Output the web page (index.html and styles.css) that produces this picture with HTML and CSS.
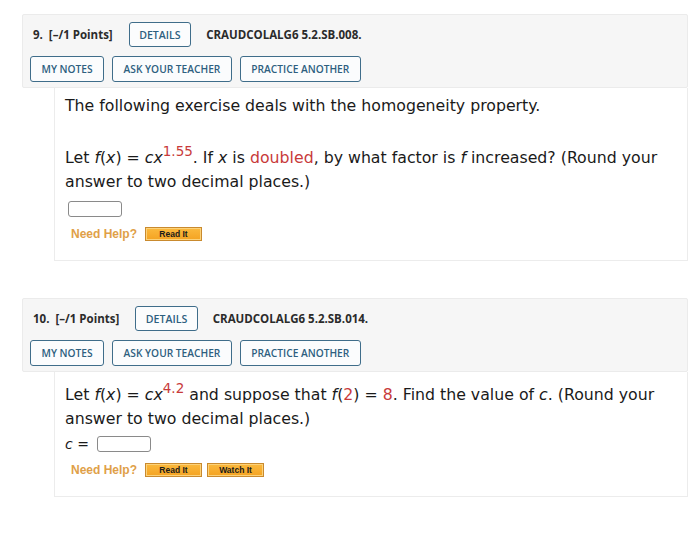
FILE: index.html
```html
<!DOCTYPE html>
<html>
<head>
<meta charset="utf-8">
<link rel="stylesheet" href="styles.css">
</head>
<body>
<div class="question q9">
  <div class="qhead">
    <div class="row1">
      <span class="qnum">9.</span>
      <span class="pts">[–/1 Points]</span>
      <span class="btn details">DETAILS</span>
      <span class="code">CRAUDCOLALG6 5.2.SB.008.</span>
    </div>
    <div class="row2">
      <span class="btn">MY NOTES</span>
      <span class="btn">ASK YOUR TEACHER</span>
      <span class="btn">PRACTICE ANOTHER</span>
    </div>
  </div>
  <div class="qbody">
    <p class="line first">The following exercise deals with the homogeneity property.</p>
    <p class="line para">Let <i>f</i>(<i>x</i>) = <i>cx</i><sup class="red">1.55</sup>. If <i>x</i> is <span class="red">doubled</span>, by what factor is <i>f</i> increased? (Round your answer to two decimal places.)</p>
    <div class="answer"><span class="input"></span></div>
    <div class="help">
      <span class="need">Need Help?</span>
      <span class="obtn">Read It</span>
    </div>
  </div>
</div>

<div class="question q10">
  <div class="qhead">
    <div class="row1">
      <span class="qnum">10.</span>
      <span class="pts">[–/1 Points]</span>
      <span class="btn details">DETAILS</span>
      <span class="code">CRAUDCOLALG6 5.2.SB.014.</span>
    </div>
    <div class="row2">
      <span class="btn">MY NOTES</span>
      <span class="btn">ASK YOUR TEACHER</span>
      <span class="btn">PRACTICE ANOTHER</span>
    </div>
  </div>
  <div class="qbody">
    <p class="line first">Let <i>f</i>(<i>x</i>) = <i>cx</i><sup class="red">4.2</sup> and suppose that <i>f</i>(<span class="red">2</span>) = <span class="red">8</span>. Find the value of <i>c</i>. (Round your answer to two decimal places.)</p>
    <div class="answer c"><i>c</i>&nbsp;=<span class="input"></span></div>
    <div class="help">
      <span class="need">Need Help?</span>
      <span class="obtn">Read It</span>
      <span class="obtn">Watch It</span>
    </div>
  </div>
</div>
</body>
</html>
```

FILE: styles.css
```css
html, body {
  margin: 0;
  padding: 0;
  background: #ffffff;
}
body {
  padding-top: 14px;
}
.question {
  margin-left: 22px;
  width: 666px;
}
.q10 {
  margin-top: 37px;
}
.qhead {
  background: #f6f6f6;
  border: 1px solid #ebebeb;
  border-radius: 2px;
  padding: 7px 8px 5px 7px;
  font-family: "Open Sans", sans-serif;
  font-weight: 700;
  font-size: 11.5px;
  color: #2b2b2b;
}
.row1 {
  display: flex;
  align-items: center;
  height: 25px;
}
.qnum {
  margin-left: 3px;
  margin-right: 6px;
}
.pts {
  margin-right: 16px;
}
.code {
  margin-left: 15px;
  color: #2b2b2b;
}
.row2 {
  display: flex;
  gap: 8px;
  margin-top: 9px;
}
.btn {
  display: inline-flex;
  align-items: center;
  justify-content: center;
  box-sizing: border-box;
  height: 26px;
  padding: 0 10.5px;
  border: 1.5px solid #3f6d8a;
  border-radius: 3px;
  background: #fbfcfd;
  color: #2e5f7f;
  font-weight: 600;
  font-size: 10.2px;
}
.details {
  height: 25px;
  padding: 0 9.5px;
  font-size: 10.6px;
}
.qbody {
  margin-left: 32px;
  border: 1px solid #ececec;
  border-top: none;
  padding: 6px 10px 19px 10px;
  font-family: "DejaVu Sans", Verdana, sans-serif;
  font-size: 15.75px;
  color: #1a1a1a;
}
.q10 .qbody {
  padding-top: 11px;
}
.line {
  margin: 0;
  line-height: 24px;
}
.para {
  margin-top: 28px;
}
sup {
  font-size: 13.5px;
  line-height: 0;
  vertical-align: 7px;
}
.red {
  color: #c83a3a;
}
.answer {
  margin-top: 6px;
  height: 18px;
  display: flex;
  align-items: center;
}
.input {
  display: inline-block;
  box-sizing: border-box;
  width: 54px;
  height: 16px;
  border: 1px solid #8a8a8a;
  border-radius: 3px;
  background: #fff;
  margin-left: 3px;
}
.answer.c {
  margin-top: 4px;
  font-size: 14px;
}
.answer.c .input {
  margin-left: 8px;
}
.help {
  display: flex;
  align-items: center;
  margin-top: 9px;
  padding-left: 6px;
}
.q10 .help {
  margin-top: 10px;
}
.need {
  font-family: "Liberation Sans", Arial, sans-serif;
  font-weight: 700;
  font-size: 12px;
  color: #e0a048;
  margin-right: 8px;
}
.obtn {
  display: inline-flex;
  align-items: center;
  justify-content: center;
  box-sizing: border-box;
  width: 57px;
  height: 14px;
  margin-right: 5px;
  border: 1px solid #c98a2e;
  box-shadow: inset 0 0 0 1px #fcd27a;
  background: linear-gradient(#fbb93d, #f4a322);
  font-family: "Liberation Sans", Arial, sans-serif;
  font-weight: 700;
  font-size: 8.5px;
  color: #1a1a1a;
}
```
